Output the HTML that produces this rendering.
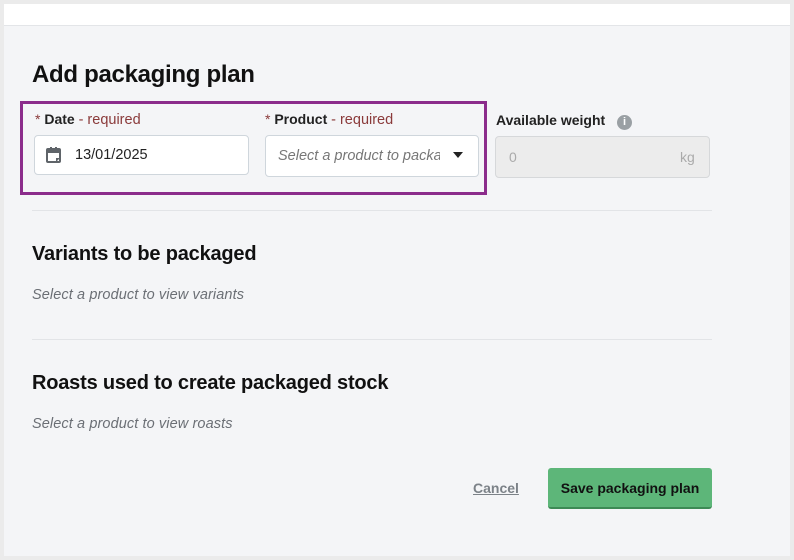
<!DOCTYPE html>
<html><head><style>
*{box-sizing:border-box;margin:0;padding:0}
body{width:794px;height:560px;background:#ebebeb;font-family:"Liberation Sans",sans-serif;position:relative;overflow:hidden}
.panel{position:absolute;left:4px;top:4px;width:786px;height:552px;background:#f4f5f7}
.top{position:absolute;left:4px;top:4px;width:786px;height:22px;background:#fff;border-bottom:1px solid #e3e5e8}
.abs{position:absolute}
h1{position:absolute;left:32px;top:61px;font-size:24px;font-weight:bold;color:#111;letter-spacing:-0.3px}
h2{position:absolute;left:32px;font-size:20px;font-weight:bold;color:#111;letter-spacing:-0.2px}
.lbl{position:absolute;font-size:14px;font-weight:bold;color:#222}
.lbl .s{color:#8a3a3a;font-weight:normal}
.lbl .r{color:#8a3a3a;font-weight:normal;font-size:14.5px}
.inp{position:absolute;background:#fff;border:1px solid #cfd6dc;border-radius:4px}
.hint{position:absolute;left:32px;font-size:14.5px;font-style:italic;color:#6b6f75;letter-spacing:0.1px}
.hr{position:absolute;left:32px;width:680px;height:1px;background:#e2e4e7}
</style></head><body>
<div class="panel"></div>
<div class="top"></div>
<h1>Add packaging plan</h1>
<div class="abs" style="left:20px;top:101px;width:467px;height:94px;border:3px solid #8b2c8b"></div>
<div class="lbl" style="left:35px;top:111px"><span class="s">*</span> Date <span class="r">- required</span></div>
<div class="lbl" style="left:265px;top:111px"><span class="s">*</span> Product <span class="r">- required</span></div>
<div class="lbl" style="left:496px;top:112px">Available weight <span style="display:inline-block;width:15px;height:15px;border-radius:50%;background:#9aa0a4;color:#fff;font-size:11px;text-align:center;line-height:15px;vertical-align:0px;margin-left:8px">i</span></div>
<div class="inp" style="left:34px;top:135px;width:215px;height:40px"></div>
<svg class="abs" style="left:45px;top:146px" width="18" height="18" viewBox="0 0 18 18"><rect x="2" y="3" width="13" height="13" rx="1" fill="none" stroke="#5f6469" stroke-width="2"/><rect x="2" y="3" width="13" height="4" fill="#5f6469"/><rect x="5" y="1" width="2" height="4" fill="#5f6469"/><rect x="10" y="1" width="2" height="4" fill="#5f6469"/><path d="M11 16 L15 12 L11 12Z" fill="#5f6469"/></svg>
<div class="abs" style="left:75px;top:147px;font-size:14.5px;color:#222">13/01/2025</div>
<div class="inp" style="left:265px;top:135px;width:214px;height:42px"></div>
<div class="abs" style="left:278px;top:148px;width:162px;overflow:hidden;white-space:nowrap;font-size:14.5px;font-style:italic;color:#777">Select a product to package</div>
<svg class="abs" style="left:453px;top:152px" width="10" height="6"><path d="M0 0H10L5 6Z" fill="#222"/></svg>
<div class="inp" style="left:495px;top:136px;width:215px;height:42px;background:#ececec;border-color:#d6d8da"></div>
<div class="abs" style="left:509px;top:149px;font-size:14px;color:#aaa">0</div>
<div class="abs" style="left:680px;top:149px;font-size:14px;color:#aaa">kg</div>
<div class="hr" style="top:210px"></div>
<h2 style="top:243px">Variants to be packaged</h2>
<div class="hint" style="top:287px">Select a product to view variants</div>
<div class="hr" style="top:339px"></div>
<h2 style="top:372px">Roasts used to create packaged stock</h2>
<div class="hint" style="top:416px">Select a product to view roasts</div>
<div class="abs" style="left:473px;top:480px;font-size:14px;font-weight:bold;color:#7c8288;text-decoration:underline">Cancel</div>
<div class="abs" style="left:548px;top:468px;width:164px;height:41px;background:#5db679;border-radius:3px;border-bottom:2px solid #3d8a55;font-size:14px;font-weight:bold;color:#111;text-align:center;line-height:40px">Save packaging plan</div>
</body></html>
